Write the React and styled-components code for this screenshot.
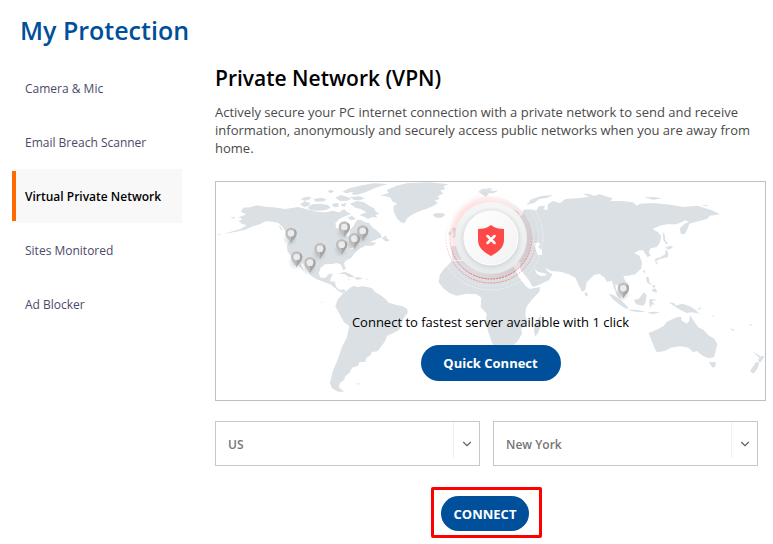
import React from "react";
import styled, { createGlobalStyle } from "styled-components";
import { ChevronDown } from "lucide-react";

const menu = [
  "Camera & Mic",
  "Email Breach Scanner",
  "Virtual Private Network",
  "Sites Monitored",
  "Ad Blocker",
];

const pins = [
  [243, 206],
  [260, 277],
  [300, 294],
  [330, 252],
  [395, 240],
  [403, 187],
  [433, 222],
  [458, 199],
  [1240, 371],
];

const land = [
  // north america
  "M92 110 L100 98 L120 97 L140 91 L172 96 L190 97 L225 102 L265 96 L290 103 L320 110 L350 112 L366 107 L388 112 L402 102 L412 112 L424 116 L405 124 L388 132 L376 145 L379 158 L394 166 L406 174 L412 186 L420 180 L419 166 L430 154 L440 136 L452 134 L465 142 L478 144 L486 156 L500 166 L512 178 L516 187 L496 194 L481 201 L500 204 L488 212 L466 212 L448 222 L434 234 L424 248 L406 258 L402 266 L407 281 L400 286 L393 269 L380 264 L366 267 L345 268 L332 278 L326 295 L332 308 L346 309 L356 298 L368 295 L362 312 L360 319 L375 320 L378 335 L388 345 L402 343 L408 349 L400 354 L388 350 L374 338 L360 328 L340 320 L318 312 L300 300 L292 284 L280 268 L271 262 L282 288 L270 278 L260 260 L245 246 L232 228 L231 210 L240 192 L228 172 L217 155 L204 143 L185 140 L168 138 L150 148 L128 154 L106 164 L74 171 L40 177 L60 171 L92 162 L110 150 L96 147 L86 139 L98 131 L84 127 L100 122 L108 118 Z",
  "M60 128 L76 125 L72 131 Z M20 178 L34 176 L30 180 Z M206 153 L212 155 L220 168 L212 163 Z",
  // arctic islands
  "M270 88 L284 79 L300 84 L298 92 L282 96 Z M292 99 L306 88 L330 86 L354 90 L362 98 L348 105 L326 107 L304 106 Z M272 73 L286 66 L304 65 L298 74 L284 77 Z M310 73 L332 68 L350 72 L342 79 L318 80 Z M352 48 L366 44 L372 51 L360 54 Z M376 68 L392 60 L410 65 L424 71 L412 77 L390 78 Z M366 86 L384 84 L386 96 L370 96 Z M392 88 L410 84 L404 96 L396 94 Z M398 50 L418 40 L450 32 L490 25 L536 27 L510 34 L488 42 L466 52 L440 60 L424 58 L430 50 L408 55 Z M420 66 L448 64 L464 70 L450 76 L432 75 Z M420 86 L440 78 L462 82 L478 92 L492 100 L498 110 L508 116 L496 120 L502 128 L488 126 L474 132 L462 125 L448 120 L470 112 L452 102 L436 98 Z M412 128 L426 122 L438 132 L424 136 Z M516 190 L528 181 L530 190 L540 196 L528 200 Z",
  // greenland
  "M509 62 L536 54 L530 45 L560 32 L590 25 L660 22 L716 28 L700 34 L706 42 L690 47 L700 55 L684 64 L688 72 L674 77 L684 84 L668 94 L650 101 L630 108 L608 118 L592 129 L584 144 L572 142 L562 132 L552 112 L550 94 L562 86 L548 80 L542 68 L524 63 Z",
  // caribbean
  "M384 297 L404 290 L428 301 L434 307 L416 306 L404 297 Z M430 309 L446 306 L458 311 L442 314 Z M410 311 L420 312 L416 314 Z M464 311 L474 311 L472 314 Z",
  // south america
  "M408 349 L420 338 L434 332 L440 337 L456 334 L472 336 L486 340 L496 352 L510 359 L524 370 L536 383 L556 389 L578 394 L592 402 L593 414 L580 430 L574 446 L568 464 L550 474 L532 482 L524 500 L512 517 L502 529 L486 531 L482 540 L470 548 L466 560 L448 562 L444 572 L426 578 L420 592 L406 604 L402 615 L390 624 L386 636 L402 650 L384 650 L366 640 L360 625 L364 606 L370 584 L380 562 L386 545 L396 516 L410 488 L418 454 L402 442 L388 416 L376 394 L384 372 L390 366 L398 356 Z",
  "M438 626 L450 625 L446 629 Z M330 381 L338 380 L336 383 Z",
  // iceland, svalbard and the british isles
  "M668 119 L678 114 L700 115 L706 121 L694 128 L678 128 Z M804 50 L816 42 L846 40 L842 48 L866 46 L852 54 L836 55 L828 66 L816 58 Z M724 162 L734 156 L742 166 L754 180 L744 186 L726 188 L732 178 Z M716 170 L725 169 L724 180 L716 181 Z",
  // europe and asia
  "M724 214 L744 212 L748 202 L738 194 L756 190 L768 180 L784 174 L790 160 L800 158 L802 172 L826 170 L838 162 L840 150 L858 146 L836 143 L838 130 L852 118 L834 126 L822 144 L818 160 L806 162 L800 148 L782 154 L776 140 L796 124 L824 106 L858 97 L890 98 L922 108 L930 118 L912 122 L920 132 L938 118 L940 104 L958 103 L980 106 L986 94 L1006 92 L1000 102 L1012 106 L1014 88 L1028 78 L1050 84 L1066 72 L1100 70 L1130 67 L1150 64 L1168 58 L1208 70 L1200 78 L1236 78 L1268 82 L1282 92 L1290 86 L1330 84 L1380 89 L1420 96 L1462 92 L1506 106 L1530 118 L1500 122 L1490 132 L1460 140 L1438 146 L1434 158 L1424 178 L1412 176 L1410 160 L1422 148 L1436 140 L1426 136 L1400 148 L1370 148 L1350 152 L1328 162 L1344 172 L1354 184 L1350 202 L1340 216 L1322 220 L1316 230 L1322 242 L1312 246 L1306 236 L1300 226 L1288 226 L1272 234 L1288 242 L1296 262 L1294 280 L1276 298 L1254 302 L1240 304 L1244 314 L1256 330 L1254 346 L1240 350 L1228 334 L1216 328 L1218 344 L1230 360 L1234 374 L1222 362 L1212 340 L1206 318 L1190 320 L1184 308 L1168 296 L1152 300 L1130 322 L1126 344 L1116 350 L1106 330 L1096 308 L1076 298 L1052 290 L1024 288 L1006 278 L1014 290 L1028 298 L1016 316 L986 330 L968 336 L956 314 L938 292 L930 282 L932 262 L900 258 L878 256 L868 242 L882 234 L910 236 L938 230 L930 216 L914 208 L900 216 L884 212 L872 226 L870 242 L856 248 L846 230 L830 216 L838 232 L846 244 L834 244 L820 228 L808 216 L792 218 L778 224 L764 238 L752 256 L728 256 L726 238 Z",
  "M950 90 L962 74 L990 64 L1030 60 L1012 68 L988 72 L972 84 Z M1118 56 L1134 56 L1162 66 L1148 70 Z M1302 66 L1330 66 L1356 70 L1330 74 Z M1474 91 L1494 90 L1490 94 Z",
  // africa and madagascar
  "M726 258 L752 258 L790 250 L806 256 L812 270 L840 276 L860 268 L888 274 L912 274 L924 296 L940 322 L958 342 L990 336 L988 350 L962 378 L948 398 L946 420 L952 442 L934 460 L936 476 L922 500 L900 518 L872 526 L854 524 L844 498 L834 468 L828 438 L830 416 L812 396 L814 368 L800 358 L772 356 L740 362 L718 354 L700 340 L686 322 L690 298 L704 280 Z",
  "M992 420 L994 442 L986 470 L976 486 L972 470 L974 446 Z M1126 350 L1134 358 L1130 366 L1124 358 Z",
  // japan and the pacific rim
  "M1358 170 L1364 180 L1366 196 L1374 206 L1368 208 L1360 194 Z M1366 218 L1380 212 L1390 216 L1376 224 Z M1366 224 L1374 230 L1374 246 L1350 252 L1336 260 L1334 252 L1352 246 L1366 238 Z M1336 262 L1344 262 L1340 270 Z M1298 288 L1304 284 L1304 298 Z M1308 306 L1316 306 L1318 322 L1326 330 L1318 328 L1310 320 Z M1324 344 L1336 340 L1342 352 L1332 352 Z M1326 330 L1338 332 L1330 340 Z",
  // indonesia and new guinea
  "M1196 356 L1210 360 L1236 378 L1256 398 L1248 402 L1228 388 L1210 374 Z M1252 404 L1278 404 L1308 410 L1290 412 L1264 408 Z M1272 374 L1286 372 L1302 352 L1310 360 L1306 384 L1300 392 L1278 388 Z M1318 372 L1342 374 L1326 378 L1334 390 L1326 388 L1322 400 L1318 388 Z M1312 412 L1334 410 L1350 412 L1328 418 Z M1376 382 L1392 384 L1398 392 L1416 386 L1440 394 L1456 404 L1468 416 L1446 412 L1430 414 L1418 408 L1400 398 Z M1462 402 L1476 396 L1468 404 Z M1504 420 L1516 426 L1510 426 Z M1560 458 L1574 466 L1568 468 Z M1616 450 L1626 446 L1624 452 Z",
  // australia and new zealand
  "M1316 474 L1340 464 L1362 452 L1370 440 L1388 432 L1402 426 L1414 426 L1414 436 L1430 446 L1438 438 L1440 420 L1450 436 L1464 456 L1482 466 L1494 480 L1514 492 L1522 508 L1516 530 L1512 546 L1496 550 L1478 542 L1460 528 L1450 532 L1436 518 L1410 514 L1382 518 L1364 528 L1340 532 L1334 520 L1326 500 Z M1496 562 L1518 562 L1516 574 L1508 578 Z",
  "M1628 530 L1642 538 L1650 544 L1664 544 L1650 564 L1644 556 L1648 548 Z M1638 560 L1648 564 L1642 582 L1630 596 L1620 588 L1630 574 Z",
];

// lakes and inland seas
const water = [
  "M382 196 L400 192 L410 200 L402 208 L396 200 Z M398 214 L406 208 L414 212 L410 224 L402 230 Z M416 222 L434 216 L428 224 Z",
  "M972 206 L984 202 L992 208 L984 216 L996 226 L996 240 L984 240 L978 226 Z",
  "M910 274 L918 274 L944 316 L958 340 L948 334 L928 308 Z",
  "M974 282 L986 292 L1002 294 L1012 300 L994 304 L980 296 Z",
];

const Pin = ({ x, y }) => (
  <g transform={`translate(${x} ${y})`}>
    <ellipse cx="-3" cy="-14" rx="23" ry="22" fill="url(#pinShade)" />
    <path
      d="M0 0 C-4 -11 -17 -18 -17 -31 A17 17 0 0 1 17 -31 C17 -18 4 -11 0 0 Z"
      fill="#bdbdbd"
    />
    <path d="M0 0 C4 -11 17 -18 17 -31 A17 17 0 0 0 12 -43 L0 -28 Z" fill="#a6a6a6" />
    <circle cy="-31" r="10" fill="#ececec" />
  </g>
);

const WorldMap = () => (
  <MapSvg viewBox="18 21 1647 654" preserveAspectRatio="xMidYMid slice" aria-hidden="true">
    <defs>
      <radialGradient id="pinShade">
        <stop offset="0" stopColor="#8e9499" stopOpacity="0.4" />
        <stop offset="1" stopColor="#8e9499" stopOpacity="0" />
      </radialGradient>
    </defs>
    <g fill="#dae0e4">
      {land.map((d) => (
        <path key={d} d={d} />
      ))}
    </g>
    <g fill="#fff">
      {water.map((d) => (
        <path key={d} d={d} />
      ))}
    </g>
    {pins.map(([x, y]) => (
      <Pin key={`${x}-${y}`} x={x} y={y} />
    ))}
  </MapSvg>
);

const ShieldBadge = () => (
  <svg width="109" height="108" viewBox="-55 -54 109 108" aria-hidden="true">
    <defs>
      <linearGradient id="halo" x1="0" y1="0" x2="1" y2="0.4">
        <stop offset="0" stopColor="#ffb0b0" stopOpacity="0.08" />
        <stop offset="0.5" stopColor="#e8b8b8" stopOpacity="0.08" />
        <stop offset="1" stopColor="#c4a4ac" stopOpacity="0.36" />
      </linearGradient>
      <radialGradient id="glow">
        <stop offset="0.8" stopColor="#ff8585" stopOpacity="0.2" />
        <stop offset="1" stopColor="#ff8585" stopOpacity="0" />
      </radialGradient>
      <linearGradient id="ring" x1="0" y1="0" x2="0" y2="1">
        <stop offset="0" stopColor="#f5f6f6" />
        <stop offset="1" stopColor="#e6e9ea" />
      </linearGradient>
      <radialGradient id="discShade">
        <stop offset="0.8" stopColor="#c9ced1" stopOpacity="0.8" />
        <stop offset="1" stopColor="#d6dadc" stopOpacity="0" />
      </radialGradient>
      <linearGradient id="disc" x1="0" y1="0" x2="1" y2="1">
        <stop offset="0" stopColor="#fff" />
        <stop offset="1" stopColor="#f2f2f2" />
      </linearGradient>
      <linearGradient id="dash" x1="0" y1="0" x2="0" y2="1">
        <stop offset="0.35" stopColor="#ff4c4c" stopOpacity="0.04" />
        <stop offset="1" stopColor="#ff4c4c" stopOpacity="0.95" />
      </linearGradient>
    </defs>
    <circle cx="-4" cy="-4" r="40" fill="url(#glow)" />
    <circle r="41" fill="url(#halo)" />
    <circle r="52" fill="none" stroke="#fff" strokeOpacity="0.7" strokeDasharray="1 1" />
    <circle r="48" fill="none" stroke="#fff" strokeOpacity="0.4" strokeDasharray="1 1" />
    <circle r="45" fill="none" stroke="url(#dash)" strokeOpacity="0.6" strokeDasharray="2 1" />
    <circle r="41" fill="none" stroke="url(#dash)" strokeDasharray="2 1" />
    <circle r="36" fill="url(#ring)" />
    <circle cy="1" r="32" fill="url(#discShade)" />
    <circle r="27" fill="url(#disc)" stroke="#fff" />
    <path
      d="M0 -13 C4 -10 8 -9 13 -9 V2 C13 10 7 14 0 18 C-7 14 -13 10 -13 2 V-9 C-8 -9 -4 -10 0 -13 Z"
      fill="#ff4848"
    />
    <path d="M-3.5 -2 L3.5 5 M3.5 -2 L-3.5 5" stroke="#fff" strokeWidth="2.5" strokeLinecap="round" />
  </svg>
);

const App = () => {
  return (
    <>
      <GlobalStyle />
      <Page>
        <Title>My Protection</Title>
        <Layout>
          <Menu>
            {menu.map((item) => (
              <MenuLink key={item} href="#" $active={item === "Virtual Private Network"}>
                {item}
              </MenuLink>
            ))}
          </Menu>
          <Content>
            <Heading>Private Network (VPN)</Heading>
            <Description>
              Actively secure your PC internet connection with a private network
              to send and receive information, anonymously and securely access
              public networks when you are away from home.
            </Description>
            <MapCard>
              <WorldMap />
              <ShieldBadge />
              <p>Connect to fastest server available with 1 click</p>
              <QuickButton>Quick Connect</QuickButton>
            </MapCard>
            <Controls>
              <Selects>
                <SelectBox>
                  <select aria-label="Country">
                    <option>US</option>
                  </select>
                  <ChevronDown size={14} />
                </SelectBox>
                <SelectBox>
                  <select aria-label="City">
                    <option>New York</option>
                  </select>
                  <ChevronDown size={14} />
                </SelectBox>
              </Selects>
              <ConnectFrame>
                <ConnectButton>CONNECT</ConnectButton>
              </ConnectFrame>
            </Controls>
          </Content>
        </Layout>
      </Page>
    </>
  );
};

const GlobalStyle = createGlobalStyle`
  * {
    box-sizing: border-box;
    margin: 0;
  }
  body {
    margin: 0;
    background-color: #fff;
    color: #000;
    font-family: "Segoe UI", "Open Sans", "Noto Sans", sans-serif;
    font-size: 13px;
  }
  button, select {
    font-family: inherit;
  }
`;

const Page = styled.main`
  padding: 13px 7px 6px 12px;
`;

const Title = styled.h1`
  padding-left: 8px;
  color: #004f9a;
  font-size: 25px;
  font-weight: 600;
  line-height: 34px;
`;

const Layout = styled.div`
  display: flex;
  align-items: flex-start;
  gap: 33px;
  padding-top: 14px;
`;

const Menu = styled.nav`
  display: flex;
  flex-direction: column;
  flex: 0 0 170px;
`;

const MenuLink = styled.a`
  position: relative;
  padding: 2px 0 0 13px;
  color: ${({ $active }) => ($active ? "#000" : "#4a4a68")};
  background-color: ${({ $active }) => ($active ? "#f8f8f8" : "transparent")};
  font-weight: ${({ $active }) => ($active ? 600 : 400)};
  font-size: 12px;
  line-height: 52px;
  text-decoration: none;
  white-space: nowrap;
  &::before {
    content: "";
    display: ${({ $active }) => ($active ? "block" : "none")};
    position: absolute;
    left: 0;
    top: 2px;
    bottom: 2px;
    width: 4px;
    background-color: #ff6a00;
  }
`;

const Content = styled.section`
  flex: 1;
  min-width: 0;
`;

const Heading = styled.h2`
  font-size: 21px;
  font-weight: 600;
  line-height: 34px;
`;

const Description = styled.p`
  padding-top: 8px;
  color: #4a4a4a;
  font-size: 13px;
  line-height: 18px;
`;

const MapCard = styled.div`
  position: relative;
  display: flex;
  flex-direction: column;
  align-items: center;
  margin-top: 24px;
  padding: 2px 0 19px;
  border: 1px solid #c0c0c0;
  overflow: hidden;
  > * {
    position: relative;
  }
  p {
    margin: 20px 0 13px;
    font-size: 13px;
    line-height: 20px;
  }
`;

const MapSvg = styled.svg`
  && {
    position: absolute;
  }
  inset: 0;
  width: 100%;
  height: 100%;
`;

const Button = styled.button`
  border: none;
  border-radius: 18px;
  background-color: #004f9a;
  color: #fff;
  font-size: 13px;
  font-weight: 700;
`;

const QuickButton = styled(Button)`
  width: 140px;
  height: 36px;
`;

const Controls = styled.form`
  padding: 20px 8px 0 0;
`;

const Selects = styled.div`
  display: flex;
  gap: 13px;
`;

const SelectBox = styled.div`
  position: relative;
  flex: 1;
  select {
    appearance: none;
    width: 100%;
    height: 45px;
    padding: 1px 30px 0 12px;
    border: 1px solid #c8c8c8;
    border-radius: 0;
    background-color: #fff;
    color: #757575;
    font-size: 12px;
    font-weight: 600;
  }
  svg {
    position: absolute;
    right: 6px;
    top: 16px;
    color: #666;
    pointer-events: none;
  }
  &::after {
    content: "";
    position: absolute;
    right: 26px;
    top: 1px;
    width: 1px;
    height: 36px;
    background-color: #f0f0f0;
    pointer-events: none;
  }
`;

const ConnectFrame = styled.div`
  width: fit-content;
  margin: 21px auto 0;
  padding: 6px 10px 4px 7px;
  border: 3px solid #fe0000;
  border-radius: 2px;
`;

const ConnectButton = styled(Button)`
  display: block;
  width: 88px;
  height: 35px;
  padding: 0;
`;

export default App;
